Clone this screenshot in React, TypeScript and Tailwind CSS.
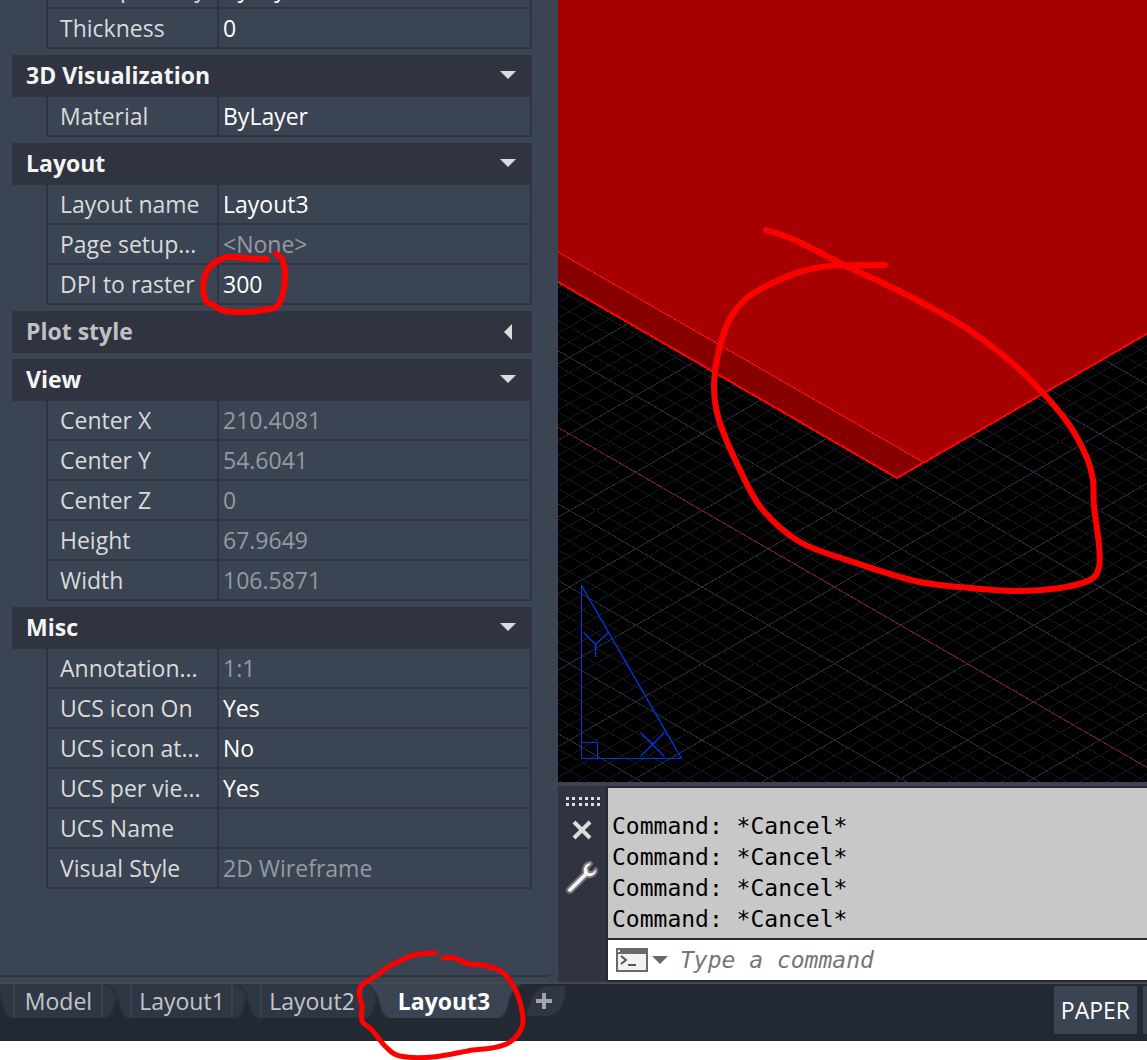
import { useState } from "react"
import type { ReactNode } from "react"
import clsx from "clsx"

type Row = { label: string; value: string; readOnly?: boolean }
type Section = { title: string; open: boolean; rows: Row[] }
type Point = [number, number]

const GENERAL: Row[] = [
  { label: "Transparency", value: "ByLayer" },
  { label: "Thickness", value: "0" },
]

const SECTIONS: Section[] = [
  { title: "3D Visualization", open: true, rows: [{ label: "Material", value: "ByLayer" }] },
  {
    title: "Layout",
    open: true,
    rows: [
      { label: "Layout name", value: "Layout3" },
      { label: "Page setup...", value: "<None>", readOnly: true },
      { label: "DPI to raster", value: "300" },
    ],
  },
  { title: "Plot style", open: false, rows: [] },
  {
    title: "View",
    open: true,
    rows: [
      { label: "Center X", value: "210.4081", readOnly: true },
      { label: "Center Y", value: "54.6041", readOnly: true },
      { label: "Center Z", value: "0", readOnly: true },
      { label: "Height", value: "67.9649", readOnly: true },
      { label: "Width", value: "106.5871", readOnly: true },
    ],
  },
  {
    title: "Misc",
    open: true,
    rows: [
      { label: "Annotation...", value: "1:1", readOnly: true },
      { label: "UCS icon On", value: "Yes" },
      { label: "UCS icon at...", value: "No" },
      { label: "UCS per vie...", value: "Yes" },
      { label: "UCS Name", value: "", readOnly: true },
      { label: "Visual Style", value: "2D Wireframe", readOnly: true },
    ],
  },
]

const TABS = [
  { name: "Model", width: 117, cls: "w-[117px]" },
  { name: "Layout1", width: 130, cls: "w-[130px]" },
  { name: "Layout2", width: 130, cls: "w-[130px]" },
  { name: "Layout3", width: 134, cls: "w-[134px]" },
]

const HISTORY = ["Command: *Cancel*", "Command: *Cancel*", "Command: *Cancel*", "Command: *Cancel*"]

// Red pen marks drawn over the window
const MARKS: { width: number; points: Point[] }[] = [
  {
    width: 6,
    points: [
      [267, 259], [245, 258], [227, 257], [213, 264], [206, 273], [203, 286], [206, 301], [213, 305],
      [225, 311], [247, 312], [263, 310], [276, 307], [282, 297], [285, 275], [282, 259], [276, 254],
    ],
  },
  {
    width: 6,
    points: [
      [766, 230], [790, 238], [815, 250], [848, 267], [885, 284], [930, 307], [968, 329], [1010, 361],
      [1043, 393], [1070, 426], [1087, 458], [1093, 480], [1094, 506], [1099, 545], [1099, 567],
      [1090, 580], [1060, 588], [1016, 591], [970, 588], [915, 581], [850, 561], [800, 542], [762, 509],
      [740, 470], [719, 420], [714, 385], [720, 346], [731, 317], [748, 297], [775, 282], [803, 271],
      [830, 266], [885, 265],
    ],
  },
  {
    width: 5,
    points: [
      [435, 953], [414, 955], [390, 966], [376, 976], [362, 985], [359, 994], [362, 1006], [362, 1021],
      [372, 1030], [386, 1047], [400, 1056], [433, 1057], [473, 1050], [492, 1048], [510, 1042],
      [522, 1027], [522, 1011], [515, 989], [502, 972], [483, 965], [469, 964], [454, 958], [443, 958],
    ],
  },
]

// Catmull-Rom spline through the pen points
function smooth(pts: Point[]) {
  let d = `M${pts[0][0]} ${pts[0][1]}`
  for (let i = 0; i < pts.length - 1; i++) {
    const p0 = pts[i - 1] ?? pts[i]
    const p1 = pts[i]
    const p2 = pts[i + 1]
    const p3 = pts[i + 2] ?? p2
    d += `C${p1[0] + (p2[0] - p0[0]) / 6} ${p1[1] + (p2[1] - p0[1]) / 6} ${p2[0] - (p3[0] - p1[0]) / 6} ${
      p2[1] - (p3[1] - p1[1]) / 6
    } ${p2[0]} ${p2[1]}`
  }
  return d
}

function PropertyTable({ rows }: { rows: Row[] }) {
  return (
    <div className="pl-[34px]">
      <table className="w-full table-fixed border-separate border-spacing-0 border-x-2 border-[#2f3440]">
        <tbody>
          {rows.map((r) => {
            const id = r.label.replace(/\W+/g, "-").toLowerCase()
            return (
              <tr key={r.label} className="h-10">
                <th
                  scope="row"
                  className="w-[171px] border-r-2 border-b-2 border-[#2f3440] p-0 pl-3 text-left font-normal whitespace-nowrap text-[#d9dadb]"
                >
                  <label htmlFor={id}>{r.label}</label>
                </th>
                <td className="border-b-2 border-[#2f3440] p-0 pl-1">
                  <input
                    id={id}
                    defaultValue={r.value}
                    readOnly={r.readOnly}
                    className={clsx(
                      "block w-full bg-transparent leading-8 outline-none",
                      r.readOnly ? "text-[#949aa2]" : "text-white",
                    )}
                  />
                </td>
              </tr>
            )
          })}
        </tbody>
      </table>
    </div>
  )
}

function PropertySection({ section }: { section: Section }) {
  const [open, setOpen] = useState(section.open)
  return (
    <section className="mt-1.5">
      <button
        aria-expanded={open}
        onClick={() => setOpen(!open)}
        className={clsx(
          "flex h-[42px] w-full items-center justify-between bg-[#2f3440] pr-4 pl-3.5 font-bold",
          open ? "text-[#f5f5f5]" : "text-[#c0c1c3]",
        )}
      >
        <span className="pb-0.5">{section.title}</span>
        <svg width="16" height="16" fill="#dcdcdc">
          <path d={open ? "M0 3H16L8 11Z" : "M12 0V16L4 8Z"} />
        </svg>
      </button>
      {open && <PropertyTable rows={section.rows} />}
    </section>
  )
}

const SLOPE = 0.57735
const STEP = 15.312

function GridLines() {
  const lines: ReactNode[] = []
  const add = (major: boolean) => {
    for (let i = -60; i < 120; i++) {
      if ((i % 5 === 0) !== major) continue
      const down = 427.3 + i * STEP - 60 * STEP
      const up = 670.2 + i * STEP - 40 * STEP
      const stroke = major ? "#272a38" : "#15161b"
      lines.push(
        <line key={`d${i}`} x1="0" y1={down} x2="1600" y2={down + 1600 * SLOPE} stroke={stroke} />,
        <line key={`u${i}`} x1="0" y1={up} x2="1600" y2={up - 1600 * SLOPE} stroke={stroke} />,
      )
    }
  }
  add(false)
  add(true)
  return <g shapeRendering="crispEdges">{lines}</g>
}

function Viewport() {
  return (
    <div className="relative flex-1 overflow-hidden bg-black">
      <svg className="absolute inset-0 size-full" aria-label="Drawing area">
        <GridLines />
        <g shapeRendering="crispEdges">
          <line x1="0" y1="427.5" x2="1600" y2={427.5 + 1600 * SLOPE} stroke="#741c1f" />
          <polygon points="0,0 1167,0 339,478 0,282" fill="#a60000" />
          <polygon points="0,252 365,462 339,478 0,282" fill="#870000" />
          <line x1="0" y1="252" x2="365" y2="462" stroke="#ff0f0f" />
          <polyline points="0,282 339,478 1167,0" fill="none" stroke="#ff0000" strokeWidth="2" />
        </g>
        {/* UCS icon */}
        <g fill="none" stroke="#0037e6">
          <path d="M23.5 585.5V758.5H123.5" />
          <path d="M23.5 742.5H39.5V758.5" />
          <path
            d="M23.5 585.5L123.5 758.5M25.5 632.5L37.5 644.5L50.5 632.5M37.5 644.5V657M82.5 732.5L106.5 756.5M82.5 756.5L106.5 732.5"
            strokeWidth="1.4"
          />
        </g>
      </svg>
    </div>
  )
}

function CommandLine() {
  return (
    <div className="mt-1 flex border-y-2 border-[#252a36] bg-[#252a36]">
      <div className="-mt-0.5 -mb-0.5 mr-0.5 flex w-12 flex-col items-center bg-[#2f3440] pt-[11px]">
        <svg width="36" height="9" className="ml-1" fill="#dedede">
          {[0, 6, 13, 19, 25, 31].map((x) => (
            <g key={x}>
              <rect x={x} width="3" height="3" />
              <rect x={x} y="6" width="3" height="3" />
            </g>
          ))}
        </svg>
        <button aria-label="Close" className="mt-[14px]">
          <svg width="20" height="20" className="block" stroke="#dcdcdc" strokeWidth="4">
            <path d="M2 2L18 18M18 2L2 18" />
          </svg>
        </button>
        <button aria-label="Customize" className="mt-5">
          <svg width="34" height="34" viewBox="0 0 34 34" className="block">
            <path
              d="M3 28L18 13C17 7 20 2 26 2L27 4L23 8L24 12L27 12L31 8L32 10C32 15 27 18 22 17L7 32C4 34 0 31 3 28Z"
              fill="#f4f4f4"
              stroke="#77777a"
              strokeWidth="2"
              strokeLinejoin="round"
            />
          </svg>
        </button>
      </div>
      <div className="min-w-0 flex-1 font-['DejaVu_Sans_Mono',monospace] text-[23px] leading-[31px]">
        <div className="bg-[#c8c8c8] pt-[23px] pb-[3px] pl-1 text-black">
          {HISTORY.map((line, i) => (
            <p key={i}>{line}</p>
          ))}
        </div>
        <div className="mt-0.5 flex h-10 items-center bg-white pl-2">
          <button aria-label="Recent commands" className="flex items-center gap-1">
            <svg width="32" height="24" fill="none">
              <rect x="1" y="1" width="30" height="22" fill="#f2f2f2" stroke="#696969" strokeWidth="2" />
              <rect width="32" height="6" fill="#696969" />
              <rect x="2" y="2" width="2" height="2" fill="#fff" />
              <path d="M5 8L10 12L5 16M12 17H20" stroke="#555" strokeWidth="2" />
            </svg>
            <svg width="16" height="8" fill="#696969">
              <path d="M0 0H16L8 8Z" />
            </svg>
          </button>
          <input
            aria-label="Command"
            placeholder="Type a command"
            className="ml-3 min-w-0 flex-1 bg-transparent outline-none placeholder:text-[#767676] placeholder:italic"
          />
        </div>
      </div>
    </div>
  )
}

function TabShape({ w, active }: { w: number; active: boolean }) {
  return (
    <svg className="absolute top-0 left-0 overflow-visible" width={w} height="34">
      <path
        d={`M-13 0C-5 2 -3 7 0 12C4 23 4 34 13 34H${w - 13}C${w - 4} 34 ${w - 4} 23 ${w} 12C${w + 3} 7 ${w + 5} 2 ${w + 13} 0Z`}
        fill={active ? "#3b4452" : "#2f3744"}
      />
      <path
        d={`M-13 0C-5 2 -3 7 0 12C4 23 4 34 13 34M${w - 13} 34C${w - 4} 34 ${w - 4} 23 ${w} 12C${w + 3} 7 ${w + 5} 2 ${w + 13} 0`}
        fill="none"
        stroke="#29303b"
        strokeWidth="2"
      />
      {!active && <path d={`M14 0V34M${w - 15} 0V32`} stroke="#36404e" strokeWidth="2" />}
    </svg>
  )
}

function StatusBar() {
  const [current, setCurrent] = useState("Layout3")
  return (
    <footer className="flex h-[59px] justify-between overflow-hidden border-t-2 border-[#45484d] bg-[#222933]">
      <nav className="flex items-start">
        {TABS.map((t) => (
          <button
            key={t.name}
            onClick={() => setCurrent(t.name)}
            className={clsx(
              "relative h-[34px]",
              t.cls,
              t.name === current ? "z-10 font-bold text-white" : "text-[#c3c5c8]",
            )}
          >
            <TabShape w={t.width} active={t.name === current} />
            <span className="relative">{t.name}</span>
          </button>
        ))}
        <button aria-label="New layout" className="ml-3 pt-0.5">
          <svg width="43" height="30" className="block">
            <path d="M3 30C8 14 12 0 28 0H43C42 20 35 30 24 30Z" fill="#2f3744" />
            <path d="M13 15H29M21 7V23" stroke="#a2a4a7" strokeWidth="4" />
          </svg>
        </button>
      </nav>
      <div className="flex gap-1.5 pt-0.5">
        <button className="h-12 bg-[#3b4452] px-[7px] text-white">PAPER</button>
        <span className="h-12 w-1 bg-[#3b4452]" />
      </div>
    </footer>
  )
}

export default function App() {
  return (
    <div className="relative min-h-screen overflow-hidden bg-white font-['Open_Sans',sans-serif] text-[23px] leading-8">
      <div className="flex bg-[#3b4452]">
        <aside className="w-[558px] shrink-0 pr-1 pb-[5px]">
          <div className="rounded-br-lg border-b-2 border-[#2f3440] pr-[22px] pb-[86px] pl-3">
            <div className="-mt-[31px]">
              <PropertyTable rows={GENERAL} />
            </div>
            {SECTIONS.map((s) => (
              <PropertySection key={s.title} section={s} />
            ))}
          </div>
        </aside>
        <main className="flex min-w-0 flex-1 flex-col">
          <Viewport />
          <CommandLine />
        </main>
      </div>
      <StatusBar />
      <svg
        className="pointer-events-none absolute top-0 left-0 z-20 size-full"
        fill="none"
        stroke="#ff0000"
        strokeLinecap="round"
        strokeLinejoin="round"
      >
        {MARKS.map((m, i) => (
          <path key={i} d={smooth(m.points)} strokeWidth={m.width} />
        ))}
      </svg>
    </div>
  )
}
